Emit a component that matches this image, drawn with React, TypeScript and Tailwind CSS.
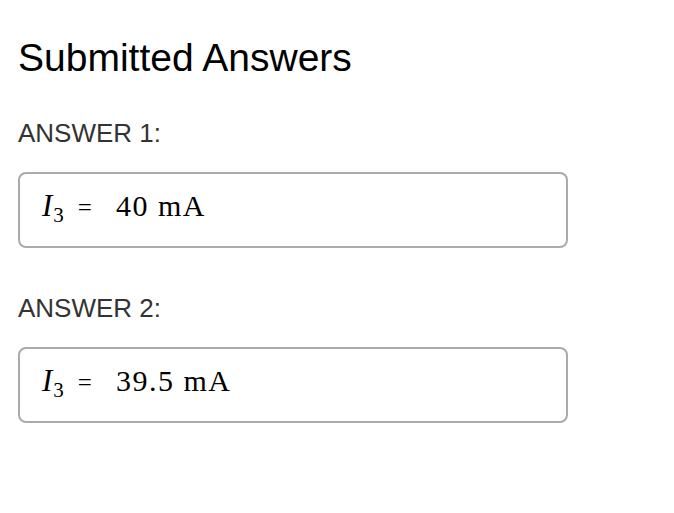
const answers = [
  { label: 'ANSWER 1:', value: '40' },
  { label: 'ANSWER 2:', value: '39.5' },
];

function MathAnswer({ value }: { value: string }) {
  return (
    <div className="flex items-baseline font-['Liberation_Serif',serif] text-[30px] text-black">
      <span className="italic text-[31px]">I</span>
      <span className="ml-[1px] relative top-[6px] text-[21px]">3</span>
      <span className="ml-[14px] text-[25px]">=</span>
      <span className="ml-[24px] tracking-[1.5px]">{value}</span>
      <span className="ml-[9px] tracking-[1.5px]">mA</span>
    </div>
  );
}

export default function App() {
  return (
    <div className="min-h-screen bg-white pl-[18px] pt-[35px] font-['Liberation_Sans',Arial,sans-serif]">
      <h1 className="text-[39px] leading-[46px] text-black">Submitted Answers</h1>
      {answers.map((a, i) => (
        <div key={i} className={i === 0 ? 'mt-[38px]' : 'mt-[46px]'}>
          <div className="text-[26px] leading-[28px] text-[#333]">{a.label}</div>
          <div className="mt-[25px] w-[550px] h-[76px] rounded-[8px] border-2 border-[#aaaaaa] flex items-center pl-[22px] pb-[7px]">
            <MathAnswer value={a.value} />
          </div>
        </div>
      ))}
    </div>
  );
}
